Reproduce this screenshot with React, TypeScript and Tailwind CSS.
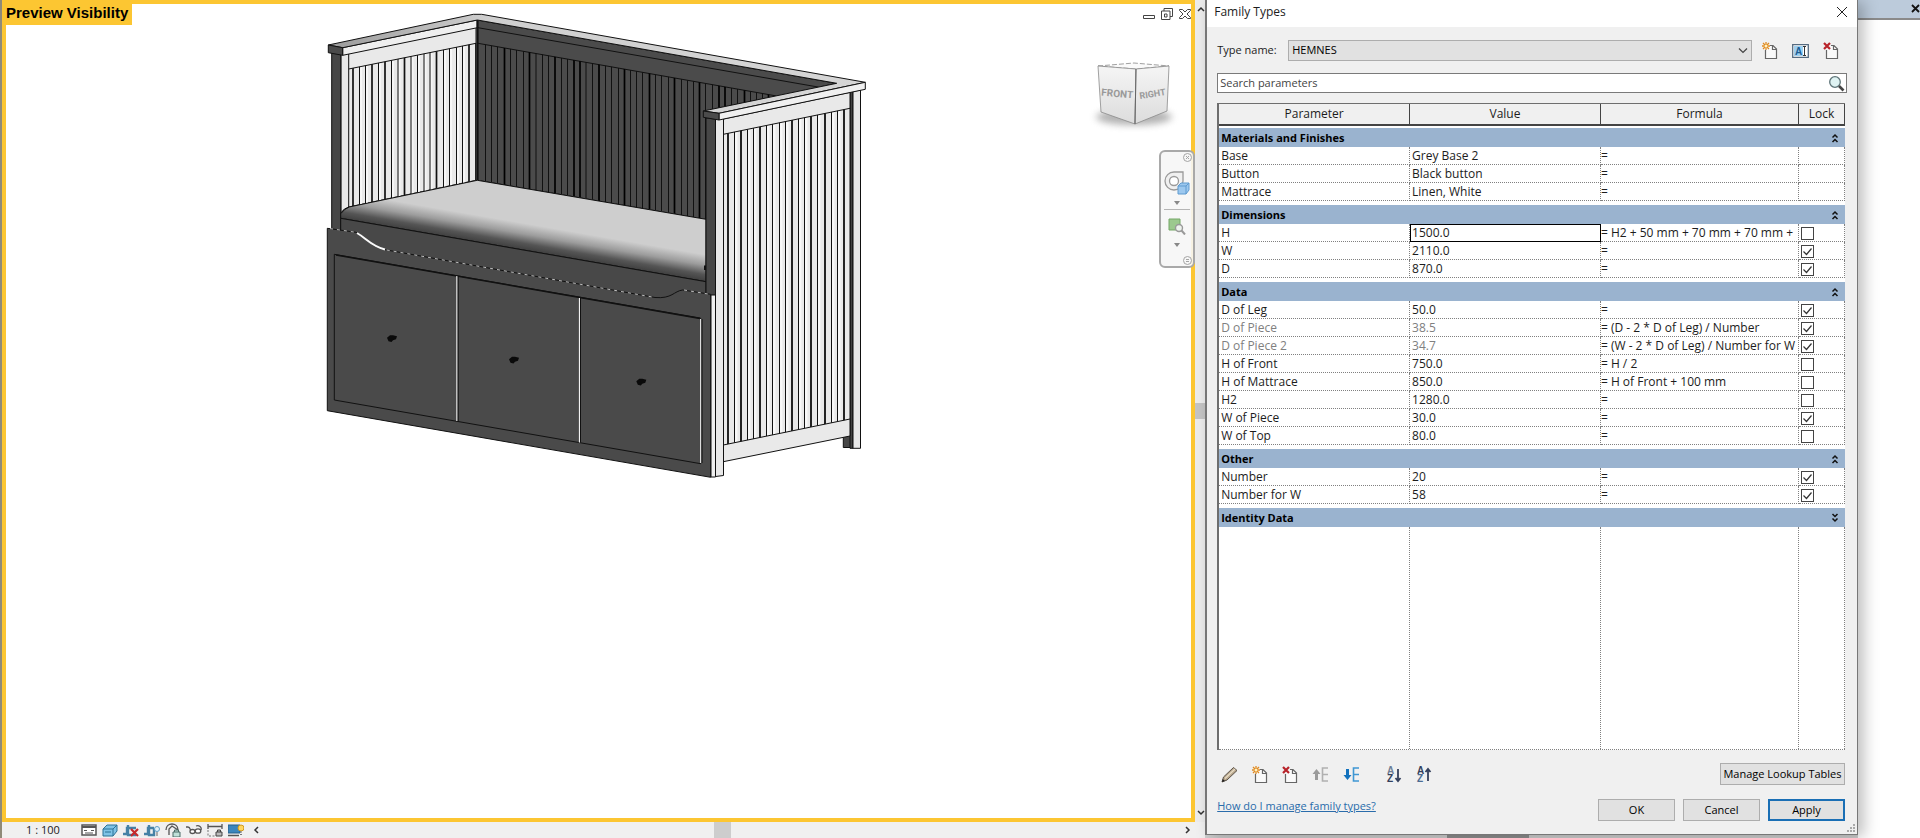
import { useState } from 'react';
import type { ReactNode } from 'react';

type Param = { name: string; value: string; formula?: string; lock?: boolean; readOnly?: boolean };
type Group = { title: string; collapsed?: boolean; params: Param[] };

const groups: Group[] = [
  {
    title: 'Materials and Finishes',
    params: [
      { name: 'Base', value: 'Grey Base 2' },
      { name: 'Button', value: 'Black button' },
      { name: 'Mattrace', value: 'Linen, White' },
    ],
  },
  {
    title: 'Dimensions',
    params: [
      { name: 'H', value: '1500.0', formula: 'H2 + 50 mm + 70 mm + 70 mm +', lock: false },
      { name: 'W', value: '2110.0', lock: true },
      { name: 'D', value: '870.0', lock: true },
    ],
  },
  {
    title: 'Data',
    params: [
      { name: 'D of Leg', value: '50.0', lock: true },
      { name: 'D of Piece', value: '38.5', formula: '(D - 2 * D of Leg) / Number', lock: true, readOnly: true },
      { name: 'D of Piece 2', value: '34.7', formula: '(W - 2 * D of Leg) / Number for W', lock: true, readOnly: true },
      { name: 'H of Front', value: '750.0', formula: 'H / 2', lock: false },
      { name: 'H of Mattrace', value: '850.0', formula: 'H of Front + 100 mm', lock: false },
      { name: 'H2', value: '1280.0', lock: false },
      { name: 'W of Piece', value: '30.0', lock: true },
      { name: 'W of Top', value: '80.0', lock: false },
    ],
  },
  {
    title: 'Other',
    params: [
      { name: 'Number', value: '20', lock: true },
      { name: 'Number for W', value: '58', lock: true },
    ],
  },
  { title: 'Identity Data', collapsed: true, params: [] },
];

// board joints, the second list holds the ones drawn as a thick line
const leftJoints = [359.5, 365.5, 378.5, 391.5, 398, 411, 417.5, 424, 430, 443.5, 449.5, 456.5, 462.5];
const leftThick = [353, 372, 385, 404.5, 436.5, 469];
const backJoints = [
  485.5, 491.5, 497.5, 510.5, 516.5, 523.5, 536, 542.5, 548.5, 561.5, 567.5, 586, 592.5, 605.5, 611.5, 618.5,
  630.5, 636.5, 642.5, 655.5, 661.5, 668.5, 681.5, 687.5, 693.5, 705.5, 712.5, 731.5, 737.5, 750.5, 756.5, 762.5,
];
const backThick = [504.5, 529.5, 555, 574, 580, 599, 624.5, 649.5, 674.5, 699.5, 719, 725, 744.5, 768.5];
const rightJoints = [734.5, 747.5, 753.5, 766.5, 772.5, 779.5, 785.5, 798.5, 804.5, 817.5, 831.5, 837.5];
const rightThick = [728, 741, 760, 792, 811, 825, 844];

function DayBed() {
  return (
    <svg viewBox="320 8 550 474" className="absolute top-[4px] left-[314px] h-[474px] w-[550px]" role="img" aria-label="HEMNES day bed">
      <defs>
        <linearGradient id="mattress" gradientUnits="userSpaceOnUse" x1="340.7" y1="218.3" x2="345.2" y2="192.3">
          <stop offset="0" stopColor="#3f3f3f" />
          <stop offset="0.25" stopColor="#555" />
          <stop offset="0.6" stopColor="#9c9c9c" />
          <stop offset="1" stopColor="#cecece" />
        </linearGradient>
        <linearGradient id="capTop" x1="0" x2="1">
          <stop offset="0" stopColor="#9b9b9b" />
          <stop offset="0.3" stopColor="#cfcfcf" />
          <stop offset="1" stopColor="#d6d6d6" />
        </linearGradient>
        <clipPath id="leftClip"><path d="M348.7 69 476 43.3V180.3L348.7 207Z" /></clipPath>
        <clipPath id="backClip"><path d="M478 43.3 776.7 96 706 112V219.5L478 180.3Z" /></clipPath>
        <clipPath id="rightClip"><path d="M723.3 134.3 850 108.3V419L723.3 445Z" /></clipPath>
      </defs>
      <g stroke="#111" strokeWidth="1" strokeLinejoin="round">
        {/* back panel */}
        <path d="M477.3 20 836.7 83.3 706 112V219.5L477.3 180.3Z" fill="#4b4b4b" />
        <path d="M478 27.7 818 87M478 43.3 776.7 96" fill="none" />
        <g clipPath="url(#backClip)">
          {backJoints.map((x) => <path key={x} d={`M${x} 20V230`} />)}
          {backThick.map((x) => <path key={x} d={`M${x} 20V230`} strokeWidth="1.7" stroke="#000" />)}
        </g>
        {/* left end, inner face */}
        <path d="M341 55V215L348.7 207 476 180.3V20L341 48Z" fill="#e9e9e9" />
        <g clipPath="url(#leftClip)">
          {leftJoints.map((x) => <path key={x} d={`M${x + 1.5} 20V220`} stroke="#f6f6f6" strokeWidth="2" />)}
          {leftJoints.map((x) => <path key={x} d={`M${x} 20V220`} />)}
          {leftThick.map((x) => <path key={x} d={`M${x} 20V220`} strokeWidth="1.7" />)}
        </g>
        <path d="M348.7 53.5V207M348.7 69 476 43.3M475.7 43V180.3" fill="none" />
        <path d="M342.7 47.7 477.3 20V27.7L342.7 55.3Z" fill="#efefef" />
        <path d="M477.5 20V180.5" strokeWidth="2.2" />
        {/* top rails */}
        <path d="M328.3 45 473.3 14.3H481.7L865.3 82.3 719 113.3 703.3 111 836.7 83.3 477.3 20 342.7 47.7Z" fill="url(#capTop)" />
        {/* front left post */}
        <path d="M331.7 52V230H340.7V54Z" fill="#474747" />
        <path d="M328.3 45 342.7 47.7V55.3L328.3 52.7Z" fill="#4b4b4b" />
        {/* mattress */}
        <path d="M340.7 218.3V213Q344 208 349 207L477.3 180.3 706 219.3V281.7Z" fill="url(#mattress)" />
        <path d="M340.7 218.3 706 281.7V300H340.7Z" fill="#484848" />
        <path d="M341 213.5Q344 209 349 207" fill="none" />
        {/* front post, right side */}
        <path d="M706 118V296H716V119Z" fill="#474747" />
        <path d="M705 265.5V270" strokeWidth="2" />
        {/* drawer front */}
        <path
          d="M327.3 228.3 356 232.3C366 236 370 248 386.7 250L655 297.5C672 299 674 291 682.7 290L710.7 294.3V477.3L327.3 410.7Z"
          fill="#4a4a4a"
        />
        <path d="M357 233C366 238 371 246 385 249.5" fill="none" stroke="#fafafa" strokeWidth="2" />
        <path d="M330 228.6 356 232.3M386.7 250 655 297.5M684 290 708 294" fill="none" stroke="#bdbdbd" strokeDasharray="3 4" />
        <path d="M334.3 254.3 700.7 318.3V463.7L334.3 400Z" fill="none" />
        <path d="M336 255 700 318.4" strokeWidth="1.6" />
        <path d="M456.9 276V421M579.5 298V442.5M700.7 319V463" stroke="#f2f2f2" strokeWidth="1.2" />
        <path d="M458.2 276V421M580.5 298V442.5M702 319V463" strokeWidth="1" />
      </g>
      {[[391, 338.7], [513, 360.3], [640.3, 382.3]].map(([x, y]) => (
        <path key={x} d={`M${x - 4} ${y - 1}l3-2.5h3l4 1-1 3-3 1-1.5 1.8-3-.8Z`} fill="#0a0a0a" />
      ))}
      <g stroke="#111" strokeWidth="1" strokeLinejoin="round">
        {/* right end, outer face */}
        <path d="M843.3 425V447.5H852.7V430Z" fill="#474747" />
        <path d="M850 92V448.3H853V91Z" fill="#444" />
        <path d="M853 91.5V448.3H860.5V90Z" fill="#e9e9e9" />
        <path d="M723.3 119 850 92.3V436L723.3 461.7Z" fill="#e9e9e9" />
        <g clipPath="url(#rightClip)">
          {rightJoints.map((x) => <path key={x} d={`M${x + 1.7} 100V450`} stroke="#f8f8f8" strokeWidth="2.4" />)}
          {rightJoints.map((x) => <path key={x} d={`M${x} 100V450`} />)}
          {rightThick.map((x) => <path key={x} d={`M${x} 100V450`} strokeWidth="1.7" stroke="#000" />)}
        </g>
        <path d="M723.3 134.3 850 108.3M723.3 445 850 419" fill="none" />
        <path d="M711 295H715.5V477H711Z" fill="#efefef" />
        <path d="M715.5 119V476.5L723.5 475.5V118Z" fill="#e9e9e9" />
        <path d="M719 113.3 865.3 82.3V89.3L719 120Z" fill="#f0f0f0" />
        <path d="M703.3 111 719 113.3V120L703.3 117.3Z" fill="#4b4b4b" />
      </g>
    </svg>
  );
}

function ViewCube() {
  return (
    <svg viewBox="0 0 90 76" className="h-[76px] w-[90px]" role="img" aria-label="View cube">
      <defs>
        <filter id="soft" x="-20%" y="-80%" width="140%" height="260%"><feGaussianBlur stdDeviation="3.5" /></filter>
        <linearGradient id="face" x1="0" y1="0" x2="0" y2="1">
          <stop offset="0" stopColor="#f5f5f5" />
          <stop offset="1" stopColor="#dcdcdc" />
        </linearGradient>
      </defs>
      <ellipse cx="45" cy="59" rx="38" ry="8" fill="#8a8a8a" opacity="0.65" filter="url(#soft)" />
      <path d="M9 8 45 5 80 8 47 11Z" fill="#fafafa" stroke="#888" strokeWidth="0.8" strokeDasharray="5 2" />
      <path d="M9 8 47 11 46 66 12 54Z" fill="url(#face)" stroke="#8a8a8a" strokeWidth="0.8" />
      <path d="M47 11 80 8 78 53 46 66Z" fill="url(#face)" stroke="#8a8a8a" strokeWidth="0.8" />
      <path d="M47 11 46 66" stroke="#666" />
      <g fontFamily="Roboto, sans-serif" fontWeight="700" fill="#999" textAnchor="middle">
        <text x="28" y="39" fontSize="10" transform="rotate(5 28 39)">FRONT</text>
        <text x="64" y="39" fontSize="9" transform="rotate(-9 64 39)">RIGHT</text>
      </g>
    </svg>
  );
}

function NavigationBar() {
  return (
    <div className="flex h-[118px] w-[36px] flex-col items-center rounded-md border-2 border-[#a9a9a9] bg-[#f6f6f6]/90">
      <button aria-label="Close" className="mt-px mr-px self-end">
        <svg viewBox="0 0 9 9" className="size-[9px]" fill="none" stroke="#a5a5a5"><circle cx="4.5" cy="4.5" r="4" /><path d="m3 3 3 3m0-3-3 3" /></svg>
      </button>
      <button aria-label="Steering wheel" className="mt-[9px]">
        <svg viewBox="0 0 26 25" className="h-[25px] w-[26px]">
          <path d="M10 1h9v9a9 9 0 1 1-9-9Z" fill="#f0f0f0" stroke="#9a9a9a" strokeWidth="1.3" />
          <circle cx="10" cy="10" r="4.5" fill="#fff" stroke="#9a9a9a" strokeWidth="1.3" />
          <path d="m14 15 3-3h8v7l-3 4h-8Z" fill="#9cc8ef" stroke="#5f9bd0" />
          <path d="M14 15h8v8m0-8 3-3" fill="none" stroke="#5f9bd0" />
        </svg>
      </button>
      <svg viewBox="0 0 6 4" className="mt-[5px] h-[4px] w-[6px]"><path d="M0 0h6L3 4Z" fill="#888" /></svg>
      <div className="mt-[4px] h-px w-[26px] bg-[#b5b5b5]" />
      <button aria-label="Zoom region" className="mt-[8px]">
        <svg viewBox="0 0 18 17" className="h-[17px] w-[18px]">
          <path d="M1 1h11v11H1Z" fill="#9cc98e" stroke="#74a766" />
          <circle cx="11" cy="10" r="3.5" fill="#eef3ee" stroke="#999" strokeWidth="1.4" />
          <path d="m13.500 12.500 3.500 4" stroke="#999" strokeWidth="2" />
        </svg>
      </button>
      <svg viewBox="0 0 6 4" className="mt-[8px] h-[4px] w-[6px]"><path d="M0 0h6L3 4Z" fill="#888" /></svg>
      <button aria-label="Options" className="mt-auto mr-px mb-px self-end">
        <svg viewBox="0 0 9 9" className="size-[9px]" fill="none" stroke="#a5a5a5"><circle cx="4.5" cy="4.5" r="4" /><path d="M3 3.500h3M3 5.500h3" /></svg>
      </button>
    </div>
  );
}

function WindowControls() {
  return (
    <div className="flex items-center gap-[6px]">
      <button aria-label="Minimize">
        <svg viewBox="0 0 12 12" className="size-[12px]" fill="#fff" stroke="#444"><path d="M.5 7.500h11v3H.5Z" /></svg>
      </button>
      <button aria-label="Restore">
        <svg viewBox="0 0 12 12" className="size-[12px]" fill="#fff" stroke="#444"><path d="M3 .5h8.500v8H3Z" /><path d="M.5 3h8.500v8.500H.5Z" /><path d="M3.500 6h2.500v3H3.500Z" /></svg>
      </button>
      <button aria-label="Close view">
        <svg viewBox="0 0 12 12" className="size-[12px]" fill="#fff" stroke="#444"><path d="M.5 1.500h3L6 4l2.500-2.500h3v1L8 6l3.500 3.500v1h-3L6 8l-2.500 2.500h-3v-1L4 6 .5 2.500Z" /></svg>
      </button>
    </div>
  );
}

const viewIcons: { label: string; icon: ReactNode }[] = [
  { label: 'Detail level', icon: <><path d="M1 2h14v10H1Z" fill="#fff" stroke="#555" strokeWidth="1.500" /><path d="M1 4h14" stroke="#555" strokeWidth="2" /><path d="M3 7.500h3m4 0h3M4 10h8" stroke="#555" strokeWidth="1.200" /></> },
  { label: 'Visual style', icon: <><path d="m1 6 4-4h10v6l-4 5H1Z" fill="#7fc3e6" stroke="#2d7296" /><path d="M1 6h10v7m0-7 4-4M3 9h6" fill="none" stroke="#2d7296" /></> },
  { label: 'Crop view off', icon: <><path d="M0 11h4V5h9M5 2v10h8" fill="none" stroke="#4581a5" strokeWidth="2.400" /><path d="m8 6 7 7m0-7-7 7" stroke="#c5292c" strokeWidth="2.200" /></> },
  { label: 'Show crop region', icon: <><path d="M0 11h4V5h6M5 2v10h5V6" fill="none" stroke="#4581a5" strokeWidth="2.400" /><circle cx="13" cy="6" r="2.500" fill="#dff1fb" stroke="#5c9cc5" /><path d="M12 10h2m-2 2h2" stroke="#666" /></> },
  { label: 'Lock view', icon: <><path d="M1 7c0-4 3-6 6-6s6 2 6 6L7 3 4 6v6" fill="#eee" stroke="#555" strokeWidth="1.300" /><path d="M8 9h7v5H8ZM9.500 9V7h4v2" fill="#bfe0d8" stroke="#4b6b66" /></> },
  { label: 'Temporary hide', icon: <><path d="M0 4h2c2 0 2 2 3 4" fill="none" stroke="#555" strokeWidth="1.300" /><ellipse cx="6.500" cy="8.500" rx="2.500" ry="2" fill="#fff" stroke="#555" strokeWidth="1.300" /><ellipse cx="12" cy="8" rx="2.800" ry="2.200" fill="#fff" stroke="#555" strokeWidth="1.300" /><path d="M15 7c1-3-2-5-5-4" fill="none" stroke="#555" strokeWidth="1.300" /></> },
  { label: 'Dimensions', icon: <><path d="M1 1v5M15 1v5M1 3.500h14" stroke="#555" strokeWidth="1.300" /><path d="M1 7v6h7" fill="none" stroke="#777" strokeDasharray="2 1.500" /><path d="M9 9h6v4H9Zm1.500 0V7h3v2" fill="#bbb" stroke="#444" /></> },
  { label: 'Preview visibility', icon: <><path d="M0 2h12v8H0Z" fill="#3b86bd" stroke="#275f88" /><path d="M0 12.500h11" stroke="#555" strokeWidth="1.500" /><circle cx="13" cy="5" r="3" fill="#ffd75e" stroke="#d39a1b" /><path d="M12 9h2m-2 2.500h2" stroke="#777" /></> },
];

function Page({ mark }: { mark: 'new' | 'delete' }) {
  return (
    <svg viewBox="0 0 16 17" className="h-[17px] w-[16px]" fill="none">
      <path d="M3.500 8v8.500h11V7L11 3.500H8M10.500 4v3.500h4" fill="#fafafa" stroke="#666" strokeWidth="1.200" />
      {mark === 'new'
        ? <><path d="M4 0v8M0 4h8M1 1l6 6M7 1 1 7" stroke="#e08a20" strokeWidth="1.300" /><circle cx="4" cy="4" r="1.500" fill="#fff3c4" /></>
        : <path d="m1 1 6 6M7 1 1 7" stroke="#b8232a" strokeWidth="2.200" />}
    </svg>
  );
}

function SortIcon({ up }: { up?: boolean }) {
  return (
    <svg viewBox="0 0 16 17" className="h-[17px] w-[16px]">
      <g fontFamily="'Liberation Sans', sans-serif" fontSize="10" fontWeight="bold">
        <text x="1" y="8" fill={up ? '#333f5c' : '#6d7d95'}>A</text>
        <text x="1" y="16" fill={up ? '#4c6b92' : '#333f5c'}>Z</text>
      </g>
      <path d={up ? 'M12 15V3M9.500 6 12 3l2.500 3' : 'M12 3v12M9.500 12l2.500 3 2.500-3'} fill="none" stroke="#333f5c" strokeWidth="1.800" />
    </svg>
  );
}

function MoveIcon({ up }: { up?: boolean }) {
  return (
    <svg viewBox="0 0 17 17" className="h-[17px] w-[17px]">
      {up
        ? <path d="M3 14V8H.5L4.500 3l4 5H6v6Z" fill="#9b9b9b" />
        : <path d="M3 3v6H.5l4 5 4-5H6V3Z" fill="#1272bd" />}
      <path d="M16 2h-5.500v13H16M10.500 8.500H16" fill="none" stroke={up ? '#b0b0b0' : '#3f97d3'} strokeWidth="1.600" />
    </svg>
  );
}

function Chevrons({ down }: { down?: boolean }) {
  return (
    <svg viewBox="0 0 8 10" className="h-[10px] w-[8px]" fill="none" stroke="#111" strokeWidth="1.500">
      <path d={down ? 'M1.500 1 4 3.500 6.500 1M1.500 5.500 4 8l2.500-2.500' : 'M1.500 4.500 4 2l2.500 2.500M1.500 9 4 6.500 6.500 9'} />
    </svg>
  );
}

const cell = 'h-[18px] border-b border-dotted border-[#808080] p-0 pl-[2px] leading-[17px] whitespace-nowrap overflow-hidden';

function ParameterTable() {
  const [locks, setLocks] = useState<Record<string, boolean>>(() => {
    const init: Record<string, boolean> = {};
    groups.forEach((g) => g.params.forEach((p) => { if (p.lock !== undefined) init[p.name] = p.lock; }));
    return init;
  });
  const [height, setHeight] = useState('1500.0');

  return (
    <div className="mt-[10px] mr-[2px] flex flex-1 flex-col border-t border-l-2 border-[#6e6e6e] bg-white">
      <table className="w-full table-fixed border-separate border-spacing-0">
        <colgroup>
          <col className="w-[30.5%]" />
          <col className="w-[30.5%]" />
          <col />
          <col className="w-[46px]" />
        </colgroup>
        <thead>
          <tr className="bg-[#f0f0f0]">
            {['Parameter', 'Value', 'Formula', 'Lock'].map((h) => (
              <th key={h} className="h-[22px] border-r border-b-2 border-[#444] p-0 text-center font-normal">{h}</th>
            ))}
          </tr>
        </thead>
        {groups.map((g, i) => (
          <tbody key={g.title}>
            <tr><td colSpan={4} className={i === 0 ? 'h-[2px] p-0' : 'h-[4px] p-0'} /></tr>
            <tr>
              <th colSpan={4} className="h-[19px] bg-[#9ab3cf] p-0 pl-[2px] text-left text-[11px] leading-[18px] font-bold text-black">
                <div className="flex items-center justify-between pr-[6px]">
                  {g.title}
                  <button aria-label={`Toggle ${g.title}`}><Chevrons down={g.collapsed} /></button>
                </div>
              </th>
            </tr>
            {g.params.map((p) => (
              <tr key={p.name} className={p.readOnly ? 'text-[#808080]' : 'text-[#1c1c1c]'}>
                <td className={`${cell} border-r`}>{p.name}</td>
                {p.name === 'H' ? (
                  <td className="h-[18px] p-0">
                    <input
                      aria-label="H value"
                      value={height}
                      onChange={(e) => setHeight(e.target.value)}
                      className="block h-[18px] w-full border border-black bg-white pb-[2px] pl-px leading-[14px] outline-none"
                    />
                  </td>
                ) : (
                  <td className={`${cell} border-r`}>{p.value}</td>
                )}
                <td className="h-[18px] overflow-hidden border-r border-b border-dotted border-[#808080] p-0 leading-[17px] whitespace-nowrap text-[#1c1c1c]">= {p.formula}</td>
                <td className={`${cell} border-r`}>
                  {p.lock !== undefined && (
                    <label className="grid w-[13px] pt-[2px]">
                      <input
                        type="checkbox"
                        aria-label={`Lock ${p.name}`}
                        checked={locks[p.name]}
                        onChange={(e) => setLocks({ ...locks, [p.name]: e.target.checked })}
                        className="peer col-start-1 row-start-1 size-[13px] appearance-none border border-[#444] bg-white"
                      />
                      <svg viewBox="0 0 13 13" className="pointer-events-none col-start-1 row-start-1 hidden size-[13px] peer-checked:block" fill="none" stroke="#333" strokeWidth="1.200">
                        <path d="m2.500 6.500 3 3 5-6" />
                      </svg>
                    </label>
                  )}
                </td>
              </tr>
            ))}
          </tbody>
        ))}
      </table>
      <div className="grid min-h-[24px] flex-1 grid-cols-[30.5%_30.5%_1fr_46px] border-b border-dotted border-[#808080]">
        <div className="border-r border-dotted border-[#808080]" />
        <div className="border-r border-dotted border-[#808080]" />
        <div className="border-r border-dotted border-[#808080]" />
        <div className="border-r border-dotted border-[#808080]" />
      </div>
    </div>
  );
}

function FamilyTypesDialog() {
  return (
    <section className="relative z-10 flex flex-1 flex-col border-r border-b border-l-2 border-[#777] bg-[#f0f0f0] shadow-[6px_2px_14px_rgba(0,0,0,0.25)]">
      <header className="flex h-[27px] items-center justify-between bg-white pr-[9px] pb-[4px] pl-[7px]">
        <h1>Family Types</h1>
        <button aria-label="Close dialog">
          <svg viewBox="0 0 12 12" className="size-[12px]" stroke="#222"><path d="m1 1 10 10M11 1 1 11" /></svg>
        </button>
      </header>

      <div className="flex flex-1 flex-col px-[10px] pt-[13px] pb-[13px]">
        <div className="flex h-[21px] items-center text-[11px]">
          <label htmlFor="type-name" className="w-[71px]">Type name:</label>
          <div className="relative flex-1">
            <select id="type-name" className="block h-[21px] w-full appearance-none border border-[#adadad] bg-[#e1e1e1] pl-[3px] text-black">
              <option>HEMNES</option>
            </select>
            <svg viewBox="0 0 10 6" className="pointer-events-none absolute top-[8px] right-[4px] h-[6px] w-[10px]" fill="none" stroke="#444" strokeWidth="1.200"><path d="m1 .5 4 4 4-4" /></svg>
          </div>
          <div className="flex items-center gap-[14px] pr-[8px] pl-[10px]">
            <button aria-label="New type"><Page mark="new" /></button>
            <button aria-label="Rename type">
              <svg viewBox="0 0 17 14" className="h-[14px] w-[17px]">
                <path d="M.7.7h15.600v12.600H.7Z" fill="#fff" stroke="#556b80" strokeWidth="1.300" />
                <path d="M2 2h9v10H2Z" fill="#9fd0f0" />
                <text x="3" y="11" fontFamily="'Liberation Sans', sans-serif" fontSize="10" fontWeight="bold" fill="#1c5d94">A</text>
                <path d="M11 2.500h3m-3 9h3m-1.500-9v9" stroke="#333" />
              </svg>
            </button>
            <button aria-label="Delete type"><Page mark="delete" /></button>
          </div>
        </div>

        <div className="mt-[12px] flex h-[20px] items-center border border-[#7a7a7a] bg-white pr-px">
          <input aria-label="Search parameters" placeholder="Search parameters" className="h-full flex-1 bg-transparent pb-[2px] pl-[2px] text-[11px] outline-none placeholder:text-[#444]" />
          <button aria-label="Search">
            <svg viewBox="0 0 17 17" className="size-[17px]">
              <circle cx="7" cy="7" r="5.300" fill="#dff3f3" stroke="#5d7478" strokeWidth="1.300" />
              <path d="m11 11 4.500 4.500" stroke="#444" strokeWidth="2.600" />
            </svg>
          </button>
        </div>

        <ParameterTable />

        <div className="mt-[13px] flex h-[22px] items-center pr-[2px]">
          <div className="flex flex-1 items-center gap-[14px] pl-[4px]">
            <button aria-label="Edit parameter">
              <svg viewBox="0 0 17 17" className="size-[17px]">
                <path d="m1 16 1.500-5L12.500 1.500 16 4.500 6 14Z" fill="#b8a78c" stroke="#5a5148" />
                <path d="M4 12.500 14 3" stroke="#e8dcc6" strokeWidth="1.300" />
                <path d="m1 16 .8-3L4 15Z" fill="#222" />
              </svg>
            </button>
            <button aria-label="New parameter"><Page mark="new" /></button>
            <button aria-label="Delete parameter"><Page mark="delete" /></button>
            <button aria-label="Move up"><MoveIcon up /></button>
            <button aria-label="Move down"><MoveIcon /></button>
            <button aria-label="Sort ascending" className="ml-[12px]"><SortIcon /></button>
            <button aria-label="Sort descending"><SortIcon up /></button>
          </div>
          <button className="h-[22px] w-[125px] border border-[#adadad] bg-[#e1e1e1] text-[11px] whitespace-nowrap text-black">Manage Lookup Tables</button>
        </div>

        <div className="mt-[14px] flex items-start justify-between pr-[2px] text-[11px]">
          <a href="#help" className="leading-[14px] text-[#2a6cab] underline">How do I manage family types?</a>
          <div className="flex gap-[8px] text-black">
            <button className="h-[22px] w-[77px] border border-[#adadad] bg-[#e1e1e1]">OK</button>
            <button className="h-[22px] w-[77px] border border-[#adadad] bg-[#e1e1e1]">Cancel</button>
            <button className="h-[22px] w-[77px] border-2 border-[#1a6fb5] bg-[#e1e1e1]">Apply</button>
          </div>
        </div>
      </div>
      <svg viewBox="0 0 9 9" className="absolute right-[1px] bottom-[1px] size-[9px]" fill="#aaa">
        <path d="M6 0h2v2H6ZM3 3h2v2H3ZM6 3h2v2H6ZM0 6h2v2H0ZM3 6h2v2H3ZM6 6h2v2H6Z" />
      </svg>
    </section>
  );
}

export default function App() {
  return (
    <div className="flex min-h-screen bg-white font-['Open_Sans','Noto_Sans',sans-serif] text-[12px] text-[#1c1c1c]">
      <main className="flex flex-1 flex-col border-l-2 border-[#8f8a78] bg-[#f0f0f0]">
        <div className="flex flex-1">
          <div className="relative flex flex-1 border-4 border-[#fcc632] bg-white">
            <DayBed />
            <div className="flex flex-1 items-start justify-between">
              <h2 className="h-[21px] bg-[#fcc632] pr-[4px] font-['Liberation_Sans',sans-serif] text-[15px] leading-[18px] font-bold text-black">Preview Visibility</h2>
              <div className="flex flex-col items-end">
                <div className="pt-[4px]"><WindowControls /></div>
                <div className="mt-[38px] pr-[12px]"><ViewCube /></div>
              </div>
            </div>
            <div className="absolute top-[146px] -right-[4px]"><NavigationBar /></div>
          </div>
          <div className="flex w-[10px] flex-col items-end justify-between bg-[#ececec] py-[6px]">
            <svg viewBox="0 0 8 6" className="h-[6px] w-[8px]" fill="none" stroke="#333" strokeWidth="1.500"><path d="m1 5 3-3 3 3" /></svg>
            <div className="h-[16px] w-full bg-[#c4c4c4]" />
            <svg viewBox="0 0 8 6" className="h-[6px] w-[8px]" fill="none" stroke="#333" strokeWidth="1.500"><path d="m1 1 3 3 3-3" /></svg>
          </div>
        </div>
        <footer className="flex h-[16px] items-center pr-[14px] pl-[24px]">
          <span className="w-[55px] text-[11px]">1 : 100</span>
          <div className="flex gap-[5px]">
            {viewIcons.map(({ label, icon }) => (
              <button key={label} aria-label={label}>
                <svg viewBox="0 0 16 14" className="h-[14px] w-[16px]">{icon}</svg>
              </button>
            ))}
          </div>
          <div className="ml-[9px] flex flex-1 items-center justify-between">
            <svg viewBox="0 0 6 8" className="h-[8px] w-[6px]" fill="none" stroke="#333" strokeWidth="1.500"><path d="M5 1 2 4l3 3" /></svg>
            <div className="h-[16px] w-[17px] bg-[#cdcdcd]" />
            <svg viewBox="0 0 6 8" className="h-[8px] w-[6px]" fill="none" stroke="#333" strokeWidth="1.500"><path d="m1 1 3 3-3 3" /></svg>
          </div>
        </footer>
      </main>

      <div className="flex w-[34%] flex-col">
        <FamilyTypesDialog />
        {/* scroll bar of the view behind */}
        <div className="flex h-[3px] bg-[#cfcfcf] pl-[37%]">
          <div className="h-full w-[82px] bg-[#8e8e8e]" />
        </div>
      </div>

      <aside className="flex w-[62px] flex-col bg-white">
        <div className="flex h-[20px] items-center justify-end border-b-2 border-[#8a8a8a] bg-[#bccbdb] pb-[2px]">
          <button aria-label="Close tab">
            <svg viewBox="0 0 9 9" className="size-[9px]" stroke="#111" strokeWidth="1.800"><path d="m1 1 7 7M8 1 1 8" /></svg>
          </button>
        </div>
      </aside>
    </div>
  );
}
